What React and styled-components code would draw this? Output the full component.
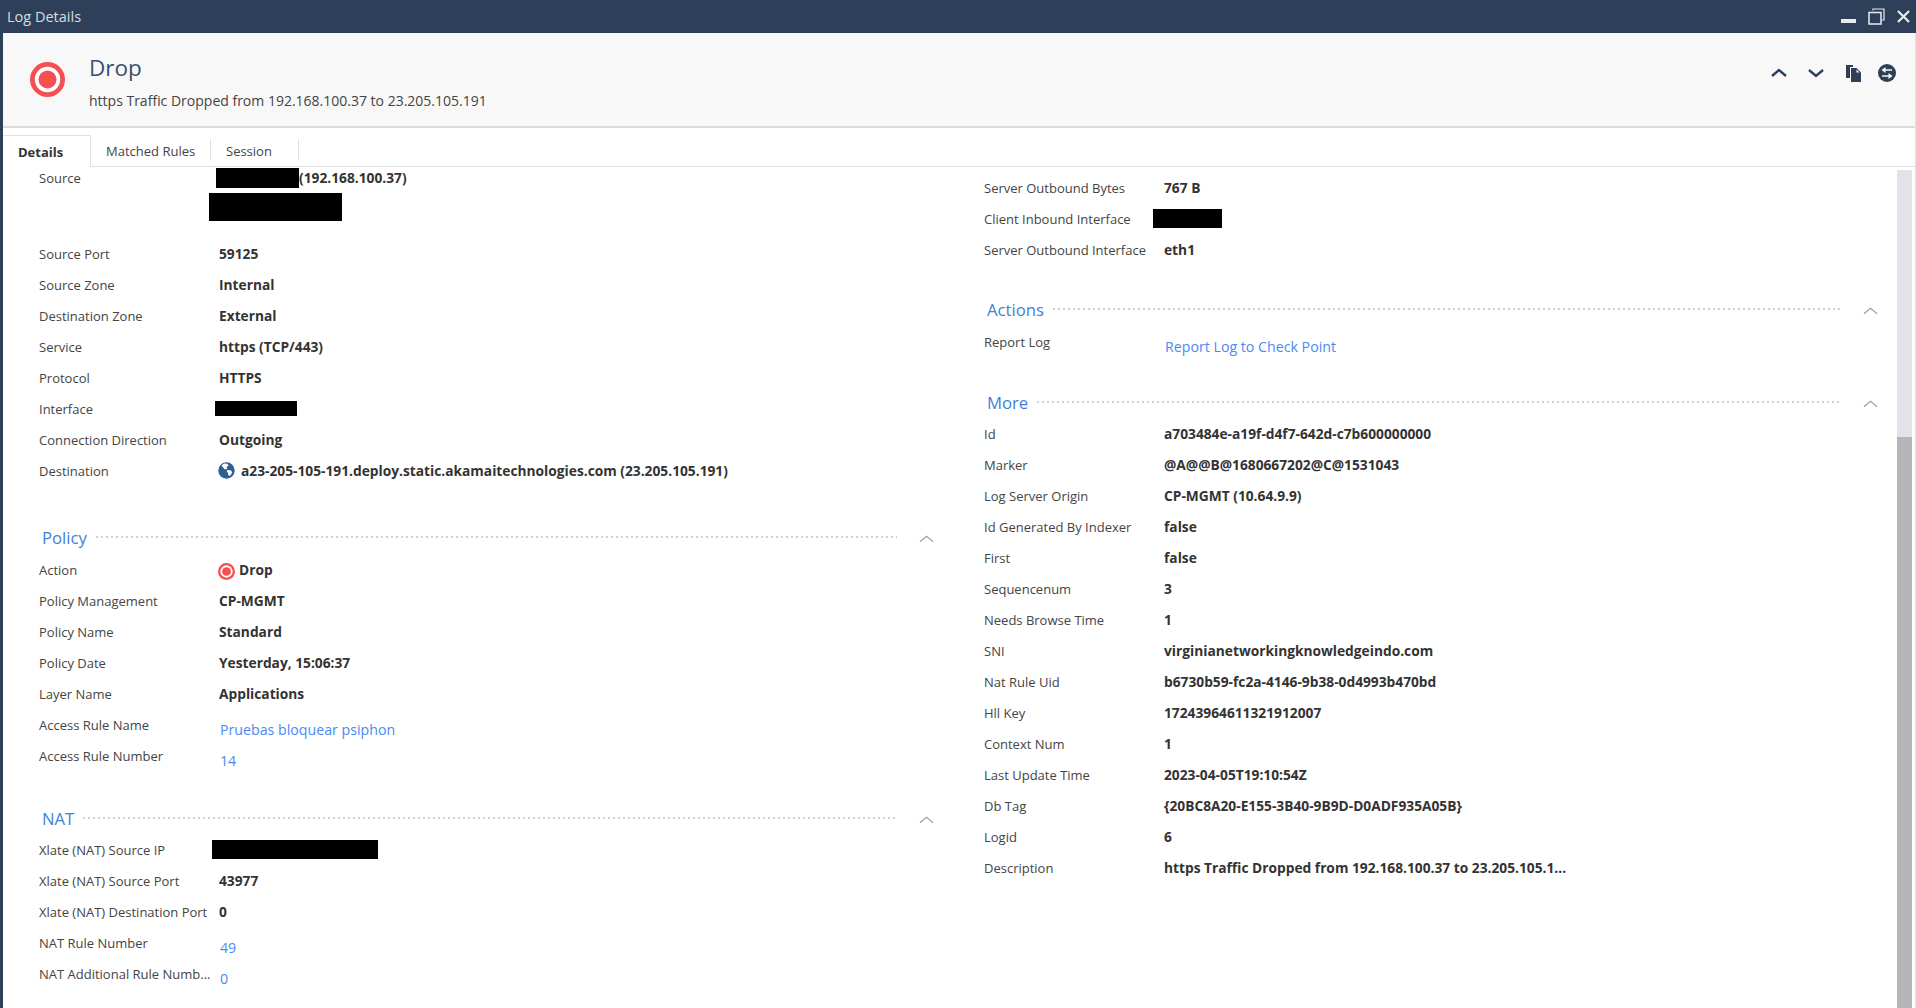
import React from "react";
import styled, { createGlobalStyle } from "styled-components";

const GlobalStyle = createGlobalStyle`
  html, body, #root {
    margin: 0;
    height: 100%;
  }
  body {
    overflow: hidden;
    background: #fff;
    font-family: "Open Sans", "Noto Sans", sans-serif;
  }
`;

const Frame = styled.div`
  height: 1008px;
  display: flex;
  flex-direction: column;
  border-left: 3px solid #2e4059;
  border-right: 1px solid #e0e2e6;
  box-sizing: border-box;
`;

const TitleBar = styled.div`
  height: 33px;
  flex: none;
  margin-left: -3px;
  margin-right: -1px;
  padding: 0 6px 0 7px;
  display: flex;
  align-items: center;
  justify-content: space-between;
  background: #2e4059;
  color: #d8dde5;
  font-size: 14.5px;
`;

const WindowButtons = styled.div`
  display: flex;
  align-items: center;
  gap: 12px;
`;

const MinimizeSlot = styled.span`
  display: inline-flex;
  margin-top: 9px;
`;

const Header = styled.div`
  height: 95px;
  flex: none;
  box-sizing: border-box;
  padding: 0 19px 0 27px;
  display: flex;
  align-items: center;
  background: #f8f8f8;
  border-bottom: 2px solid #dcdcdc;
`;

const HeaderText = styled.div`
  margin-left: 24px;
  padding-top: 6px;
  flex: 1;
  display: flex;
  flex-direction: column;
  gap: 9px;
`;

const HeaderTitle = styled.div`
  font-size: 22.5px;
  line-height: 28px;
  color: #3d4f6e;
`;

const HeaderSub = styled.div`
  font-size: 14px;
  line-height: 20px;
  color: #444;
`;

const HeaderTools = styled.div`
  display: flex;
  align-items: center;
  gap: 21px;
  margin-bottom: 14px;
`;

const Tabs = styled.div`
  height: 31px;
  flex: none;
  margin-top: 7px;
  display: flex;
  align-items: flex-end;
  border-bottom: 1px solid #dfe1e5;
`;

const Tab = styled.div`
  height: ${({ $active }) => ($active ? "32px" : "22px")};
  width: ${({ $w }) => $w}px;
  box-sizing: border-box;
  margin-bottom: ${({ $active }) => ($active ? "-1px" : "5px")};
  padding: ${({ $active }) => ($active ? "0" : "2px")} 0 0 15px;
  display: flex;
  align-items: center;
  font-size: 13px;
  color: ${({ $active }) => ($active ? "#333" : "#444")};
  font-weight: ${({ $active }) => ($active ? 700 : 400)};
  background: #fff;
  border-right: 1px solid #dfe1e5;
  border-top: ${({ $active }) => ($active ? "1px solid #dfe1e5" : "none")};
`;

const Body = styled.div`
  flex: 1;
  min-height: 0;
  display: flex;
  overflow: hidden;
`;

const Columns = styled.div`
  flex: 1;
  display: grid;
  grid-template-columns: 945px 1fr;
  overflow: hidden;
`;

const Column = styled.div`
  margin-top: ${({ $top }) => $top}px;
  padding-left: 36px;
  display: flex;
  flex-direction: column;
`;

const Row = styled.div`
  height: 31px;
  flex: none;
  display: flex;
  align-items: center;
  font-size: 13px;
  color: #444;
`;

const Label = styled.div`
  width: 180px;
  flex: none;
  white-space: nowrap;
  overflow: hidden;
`;

const Value = styled.div`
  font-size: 13.75px;
  font-weight: 700;
  color: #333;
  white-space: nowrap;
  display: flex;
  align-items: center;
`;

const LinkValue = styled.a`
  padding: 10px 0 0 1px;
  font-size: 14.2px;
  color: #4a8af4;
  white-space: nowrap;
`;

const Redacted = styled.span`
  display: inline-block;
  height: ${({ $h }) => $h}px;
  width: ${({ $w }) => $w}px;
  margin-left: ${({ $x }) => $x || 0}px;
  background: #000;
`;

const SourceExtra = styled.div`
  height: 45px;
  flex: none;
  display: flex;
  align-items: flex-start;
  padding-left: 170px;
`;

const SectionHead = styled.div`
  height: 32px;
  flex: none;
  margin: ${({ $gap }) => $gap}px ${({ $right }) => $right}px ${({ $after }) => $after || 0}px 3px;
  display: flex;
  align-items: center;
`;

const SectionTitle = styled.div`
  font-size: 16.7px;
  color: #3f80d8;
`;

const Dots = styled.div`
  flex: 1;
  height: 2px;
  margin: 0 22px 0 9px;
  background: repeating-linear-gradient(90deg, #d0d0d0 0 2px, transparent 2px 5px);
`;

const FoldMark = styled.span`
  display: inline-flex;
  margin-top: 4px;
`;

const Track = styled.div`
  width: 15px;
  flex: none;
  margin: 3px 3px 0 0;
  display: flex;
  flex-direction: column;
  justify-content: flex-end;
  background: #e0e3e8;
`;

const Thumb = styled.div`
  height: 571px;
  background: #b3b6b9;
`;

const IconGap = styled.span`
  display: inline-flex;
  margin: ${({ $m }) => $m};
`;

const DropIcon = ({ size }) => (
  <svg width={size} height={size} viewBox="0 0 35 35">
    <circle cx="17.5" cy="17.5" r="17.500" fill="#f45050" />
    <circle cx="17.5" cy="17.5" r="12.700" fill="#fff" />
    <circle cx="17.5" cy="17.5" r="9" fill="#f45050" />
  </svg>
);

const Globe = () => (
  <svg width="17" height="17" viewBox="0 0 17 17">
    <circle cx="8.5" cy="8.5" r="8.2" fill="#2f5f97" />
    <path d="M6 1.500l3.500.2 1 2-2 1.400.8 1.800-2.500.4L4.700 5 3.500 3.500z" fill="#fff" />
    <path d="M9 8l4 .6 1.300 2-2.500 3.400-1.500-1-.4-2.500L9 10z" fill="#fff" />
  </svg>
);

const Chevron = ({ down, color = "#2e4059", w = 16, sw = 2.4 }) => (
  <svg width={w} height="10" viewBox="0 0 16 10" fill="none">
    <path
      d={down ? "M1 2l7 6 7-6" : "M1 8l7-6 7 6"}
      stroke={color}
      strokeWidth={sw}
    />
  </svg>
);

const CopyIcon = () => (
  <svg width="16" height="18" viewBox="0 0 16 18">
    <path d="M1 1h7v2H5v11H1z" fill="#2e4059" />
    <path d="M6 4h5.500L16 8.500V18H6z" fill="#2e4059" />
    <path d="M11.500 5.500L14.500 8.500h-3z" fill="#f8f8f8" />
  </svg>
);

const SwapIcon = () => (
  <svg width="18" height="18" viewBox="0 0 18 18">
    <circle cx="9" cy="9" r="9" fill="#2e4059" />
    <path d="M14 5.200H7.500V3L3.500 6l4 3V6.800H14z" fill="#f8f8f8" />
    <path d="M4 11.200h6.500V9l4 3-4 3v-2.200H4z" fill="#f8f8f8" />
  </svg>
);

const Field = ({ label, children }) => (
  <Row>
    <Label>{label}</Label>
    <Value>{children}</Value>
  </Row>
);

const LinkField = ({ label, children }) => (
  <Row>
    <Label>{label}</Label>
    <LinkValue>{children}</LinkValue>
  </Row>
);

const Section = ({ title, gap, right, after }) => (
  <SectionHead $gap={gap} $right={right} $after={after}>
    <SectionTitle>{title}</SectionTitle>
    <Dots />
    <FoldMark>
      <Chevron color="#a0a0a0" w={15} sw={1.300} />
    </FoldMark>
  </SectionHead>
);

const moreFields = [
  ["Id", "a703484e-a19f-d4f7-642d-c7b600000000"],
  ["Marker", "@A@@B@1680667202@C@1531043"],
  ["Log Server Origin", "CP-MGMT (10.64.9.9)"],
  ["Id Generated By Indexer", "false"],
  ["First", "false"],
  ["Sequencenum", "3"],
  ["Needs Browse Time", "1"],
  ["SNI", "virginianetworkingknowledgeindo.com"],
  ["Nat Rule Uid", "b6730b59-fc2a-4146-9b38-0d4993b470bd"],
  ["Hll Key", "17243964611321912007"],
  ["Context Num", "1"],
  ["Last Update Time", "2023-04-05T19:10:54Z"],
  ["Db Tag", "{20BC8A20-E155-3B40-9B9D-D0ADF935A05B}"],
  ["Logid", "6"],
  ["Description", "https Traffic Dropped from 192.168.100.37 to 23.205.105.1..."],
];

export default function App() {
  return (
    <>
      <GlobalStyle />
      <Frame>
        <TitleBar>
          Log Details
          <WindowButtons>
            <MinimizeSlot>
              <svg width="15" height="4" viewBox="0 0 15 4">
                <rect width="15" height="4" fill="#e8ebf0" />
              </svg>
            </MinimizeSlot>
            <svg width="17" height="17" viewBox="0 0 17 17" fill="none" stroke="#e8ebf0">
              <path d="M5 2.500V1h11v11h-2" strokeWidth="1.200" />
              <rect x="1" y="4.500" width="12" height="11.500" strokeWidth="1.500" />
              <rect x="3" y="8" width="8" height="5.500" fill="#2e4059" stroke="none" />
            </svg>
            <svg width="13" height="13" viewBox="0 0 14 14" stroke="#e8ebf0" strokeWidth="2.400">
              <path d="M1 1l12 12M13 1L1 13" />
            </svg>
          </WindowButtons>
        </TitleBar>
        <Header>
          <DropIcon size={35} />
          <HeaderText>
            <HeaderTitle>Drop</HeaderTitle>
            <HeaderSub>https Traffic Dropped from 192.168.100.37 to 23.205.105.191</HeaderSub>
          </HeaderText>
          <HeaderTools>
            <Chevron />
            <Chevron down />
            <CopyIcon />
            <IconGap $m="0 0 0 -4px"><SwapIcon /></IconGap>
          </HeaderTools>
        </Header>
        <Tabs>
          <Tab $active $w={88}>Details</Tab>
          <Tab $w={120}>Matched Rules</Tab>
          <Tab $w={88}>Session</Tab>
        </Tabs>
        <Body>
          <Columns>
            <Column $top={-5}>
              <Row>
                <Label>Source</Label>
                <Value>
                  <Redacted $w={83} $h={20} $x={-3} />
                  (192.168.100.37)
                </Value>
              </Row>
              <SourceExtra>
                <Redacted $w={133} $h={28} />
              </SourceExtra>
              <Field label="Source Port">59125</Field>
              <Field label="Source Zone">Internal</Field>
              <Field label="Destination Zone">External</Field>
              <Field label="Service">https (TCP/443)</Field>
              <Field label="Protocol">HTTPS</Field>
              <Field label="Interface">
                <Redacted $w={82} $h={15} $x={-4} />
              </Field>
              <Field label="Connection Direction">Outgoing</Field>
              <Field label="Destination">
                <IconGap $m="0 6px 0 -1px"><Globe /></IconGap>
                a23-205-105-191.deploy.static.akamaitechnologies.com (23.205.105.191)
              </Field>
              <Section title="Policy" gap={35} right={14} after={1} />
              <Field label="Action">
                <IconGap $m="3px 4px 0 -1px"><DropIcon size={17} /></IconGap>
                Drop
              </Field>
              <Field label="Policy Management">CP-MGMT</Field>
              <Field label="Policy Name">Standard</Field>
              <Field label="Policy Date">Yesterday, 15:06:37</Field>
              <Field label="Layer Name">Applications</Field>
              <LinkField label="Access Rule Name">Pruebas bloquear psiphon</LinkField>
              <LinkField label="Access Rule Number">14</LinkField>
              <Section title="NAT" gap={31} right={14} />
              <Field label="Xlate (NAT) Source IP">
                <Redacted $w={166} $h={19} $x={-7} />
              </Field>
              <Field label="Xlate (NAT) Source Port">43977</Field>
              <Field label="Xlate (NAT) Destination Port">0</Field>
              <LinkField label="NAT Rule Number">49</LinkField>
              <LinkField label="NAT Additional Rule Numb...">0</LinkField>
            </Column>
            <Column $top={5}>
              <Field label="Server Outbound Bytes">767 B</Field>
              <Field label="Client Inbound Interface">
                <Redacted $w={69} $h={19} $x={-11} />
              </Field>
              <Field label="Server Outbound Interface">eth1</Field>
              <Section title="Actions" gap={28} right={19} after={1} />
              <LinkField label="Report Log">Report Log to Check Point</LinkField>
              <Section title="More" gap={29} right={19} />
              {moreFields.map(([label, value]) => (
                <Field key={label} label={label}>{value}</Field>
              ))}
            </Column>
          </Columns>
          <Track>
            <Thumb />
          </Track>
        </Body>
      </Frame>
    </>
  );
}
